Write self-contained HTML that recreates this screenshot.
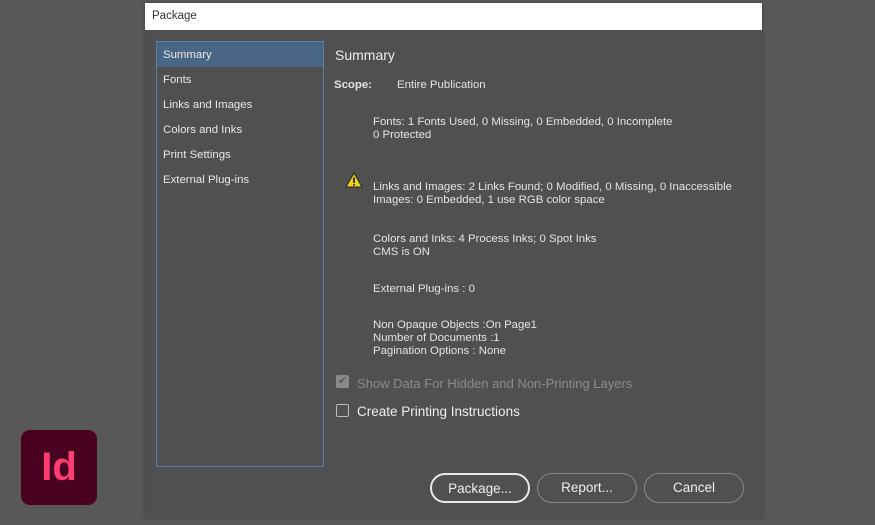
<!DOCTYPE html>
<html><head><meta charset="utf-8"><style>
*{margin:0;padding:0;box-sizing:border-box}
body{width:875px;height:525px;background:#585858;font-family:"Liberation Sans",sans-serif;position:relative;overflow:hidden;color:#e6e6e6}
.a{position:absolute;white-space:nowrap}
#dlg{position:absolute;left:145px;top:3px;width:617px;height:515px;background:#505050;box-shadow:0 0 3px #3a3a3a}
#title{position:absolute;left:0;top:0;width:617px;height:27px;background:#fff;color:#333;font-size:11.5px;padding:7px 0 0 7px}
#list{position:absolute;left:11px;top:38px;width:168px;height:426px;border:1px solid #5a7fa3;background:#505050}
#list div{height:25px;font-size:11.4px;padding:7px 0 0 6px;color:#e8e8e8}
#list .sel{background:#4a6685}
.t{font-size:11.4px;color:#e4e4e4;line-height:13px}
.btn{position:absolute;top:470px;height:30px;width:100px;border:1.5px solid #8a8a8a;border-radius:15px;font-size:13.5px;text-align:center;line-height:27px;color:#eee}
</style></head><body>
<div id="dlg">
<div id="title">Package</div>
<div id="list"><div class="sel">Summary</div><div>Fonts</div><div>Links and Images</div><div>Colors and Inks</div><div>Print Settings</div><div>External Plug-ins</div></div>
<div class="a" style="left:190px;top:44px;font-size:14px;color:#eee">Summary</div>
<div class="a t" style="left:189px;top:76px;font-weight:bold">Scope:</div>
<div class="a t" style="left:252px;top:76px">Entire Publication</div>
<div class="a t" style="left:228px;top:113px">Fonts: 1 Fonts Used, 0 Missing, 0 Embedded, 0 Incomplete<br>0 Protected</div>
<svg class="a" style="left:200px;top:169px" width="18" height="16" viewBox="0 0 18 16"><path d="M9 1L17 15H1Z" fill="#f2d21c" stroke="#222" stroke-width="1"/><rect x="8.2" y="5.5" width="1.6" height="5.5" fill="#111"/><rect x="8.2" y="12" width="1.6" height="1.6" fill="#111"/></svg>
<div class="a t" style="left:228px;top:178px">Links and Images: 2 Links Found; 0 Modified, 0 Missing, 0 Inaccessible<br>Images: 0 Embedded, 1 use RGB color space</div>
<div class="a t" style="left:228px;top:230px">Colors and Inks: 4 Process Inks; 0 Spot Inks<br>CMS is ON</div>
<div class="a t" style="left:228px;top:280px">External Plug-ins : 0</div>
<div class="a t" style="left:228px;top:316px">Non Opaque Objects :On Page1<br>Number of Documents :1<br>Pagination Options : None</div>
<div class="a" style="left:191px;top:372px;width:13px;height:13px;background:#8a8a8a;border-radius:2px;color:#5a5a5a;font-size:11px;line-height:13px;text-align:center">✔</div>
<div class="a" style="left:212px;top:373px;font-size:13px;color:#8c8c8c">Show Data For Hidden and Non-Printing Layers</div>
<div class="a" style="left:191px;top:401px;width:13px;height:13px;border:1px solid #bbb;border-radius:2px"></div>
<div class="a" style="left:212px;top:401px;font-size:13.5px;color:#eee">Create Printing Instructions</div>
<div class="btn" style="left:285px;border:2px solid #e8e8e8">Package...</div>
<div class="btn" style="left:392px">Report...</div>
<div class="btn" style="left:499px">Cancel</div>
</div>
<div class="a" style="left:21px;top:430px;width:76px;height:75px;background:#49021f;border-radius:9px;color:#ff3d73;font-size:40px;font-weight:bold;text-align:center;line-height:75px">Id</div>
</body></html>
